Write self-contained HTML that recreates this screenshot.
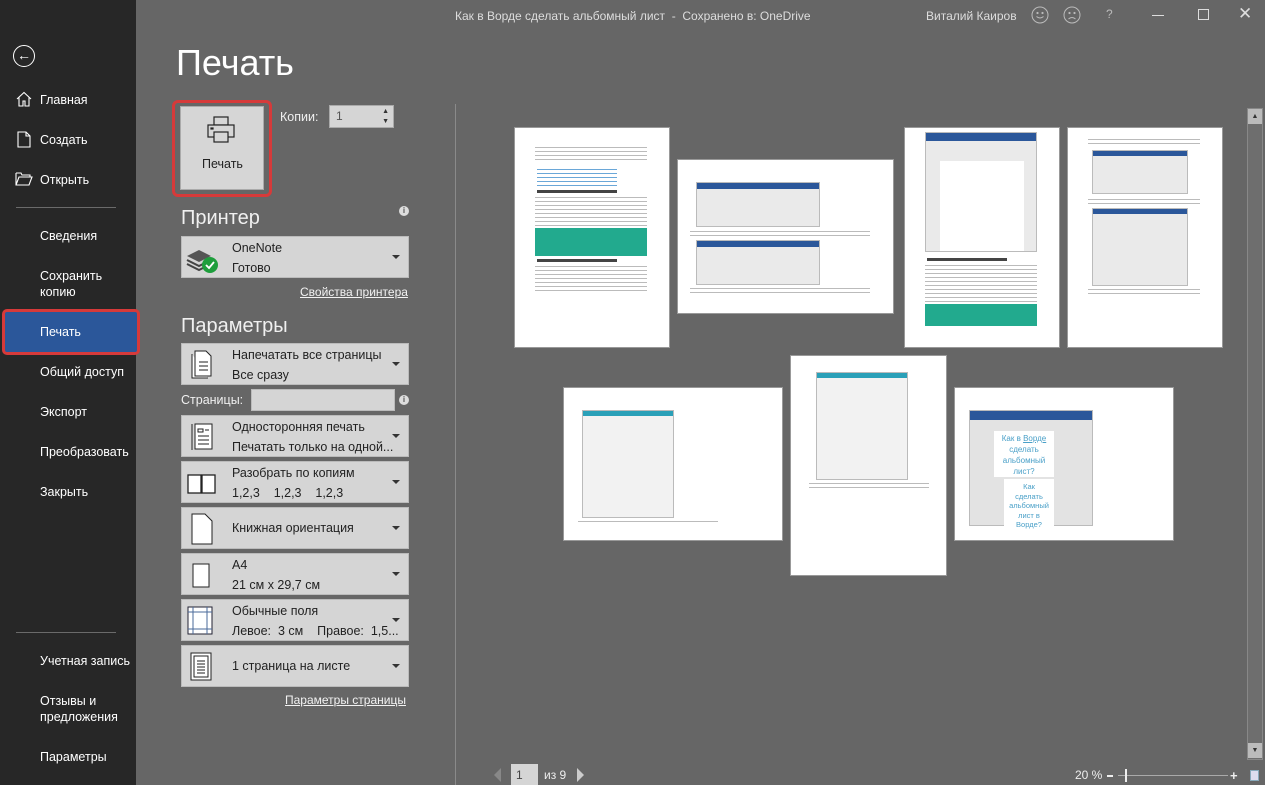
<!DOCTYPE html>
<html><head><meta charset="utf-8"><style>
*{margin:0;padding:0;box-sizing:border-box}
body{width:1265px;height:785px;overflow:hidden;background:#666;font-family:"Liberation Sans","Noto Sans CJK SC",sans-serif;position:relative}
.a{position:absolute}
.side{left:0;top:0;width:136px;height:785px;background:#272727}
.mi{position:absolute;left:40px;color:#fff;font-size:12.5px;line-height:16px}
.hr{position:absolute;left:16px;width:100px;height:1px;background:#6a6a6a}
.dd{position:absolute;left:181px;width:228px;background:#d5d5d5;border:1px solid #bbb}
.dd .t{position:absolute;left:50px;font-size:12.5px;color:#222;line-height:15px}
.dd .ar{position:absolute;right:8px;top:50%;margin-top:-2px;border-left:4px solid transparent;border-right:4px solid transparent;border-top:4px solid #333}
.h{position:absolute;left:181px;color:#f0f0f0;font-size:20px}
.lnk{position:absolute;color:#f2f2f2;font-size:12px;text-decoration:underline}
.pg{position:absolute;background:#fff;border:1px solid #999}
.tx{position:absolute;height:var(--h);background:repeating-linear-gradient(#fff 0 1px,#bbb 1px 2px,#fff 2px 4px)}
.ss{position:absolute;background:#eaeaea;border:1px solid #bbb}
.bar{position:absolute;background:#2b579a}
.info{position:absolute;width:10px;height:10px;border-radius:50%;background:#ddd;color:#555;font-size:8px;font-weight:bold;text-align:center;line-height:10px}
</style></head><body>
<div class="a side"></div>
<div class="a" style="left:455px;top:9px;color:#ddd;font-size:12px">Как в Ворде сделать альбомный лист&nbsp; - &nbsp;Сохранено в: OneDrive</div>
<div class="a" style="left:926px;top:9px;color:#ddd;font-size:12px">Виталий Каиров</div>
<svg class="a" style="left:1031px;top:6px" width="18" height="18" viewBox="0 0 18 18" fill="none" stroke="#bbb"><circle cx="9" cy="9" r="8"/><circle cx="6.5" cy="7" r=".6" fill="#bbb"/><circle cx="11.5" cy="7" r=".6" fill="#bbb"/><path d="M5.5 10.5q3.5 3 7 0"/></svg>
<svg class="a" style="left:1063px;top:6px" width="18" height="18" viewBox="0 0 18 18" fill="none" stroke="#bbb"><circle cx="9" cy="9" r="8"/><circle cx="6.5" cy="7" r=".6" fill="#bbb"/><circle cx="11.5" cy="7" r=".6" fill="#bbb"/><path d="M5.5 13q3.5-3 7 0"/></svg>
<div class="a" style="left:1106px;top:7px;color:#bbb;font-size:12px">?</div>
<div class="a" style="left:1152px;top:15px;width:12px;height:1px;background:#ddd"></div>
<div class="a" style="left:1198px;top:9px;width:11px;height:11px;border:1px solid #ddd"></div>
<div class="a" style="left:1238px;top:4px;color:#ddd;font-size:17px">✕</div>
<div class="a" style="left:13px;top:45px;width:22px;height:22px;border:1.5px solid #fff;border-radius:50%;color:#fff;font-size:14px;text-align:center;line-height:19px">←</div>
<svg class="a" style="left:16px;top:91px" width="16" height="16" viewBox="0 0 16 16" fill="none" stroke="#fff" stroke-width="1.1"><path d="M1 8L8 1.5 15 8M3 6.5V15h4v-5h2v5h4V6.5"/></svg>
<div class="mi" style="top:92px">Главная</div>
<svg class="a" style="left:17px;top:131px" width="14" height="17" viewBox="0 0 14 17" fill="none" stroke="#fff" stroke-width="1.1"><path d="M1 1h8l4 4v11H1zM9 1v4h4"/></svg>
<div class="mi" style="top:132px">Создать</div>
<svg class="a" style="left:15px;top:172px" width="18" height="14" viewBox="0 0 18 14" fill="none" stroke="#fff" stroke-width="1.1"><path d="M1 1h5l1 2h8v2M1 1v12h13l3-8H4L1 13"/></svg>
<div class="mi" style="top:172px">Открыть</div>
<div class="hr" style="top:207px"></div>
<div class="mi" style="top:228px">Сведения</div>
<div class="mi" style="top:268px">Сохранить<br>копию</div>
<div class="a" style="left:2px;top:309px;width:138px;height:46px;border:3px solid #d63a3a;border-radius:5px;background:#2b579a"></div>
<div class="mi" style="top:324px">Печать</div>
<div class="mi" style="top:364px">Общий доступ</div>
<div class="mi" style="top:404px">Экспорт</div>
<div class="mi" style="top:444px">Преобразовать</div>
<div class="mi" style="top:484px">Закрыть</div>
<div class="hr" style="top:632px"></div>
<div class="mi" style="top:653px">Учетная запись</div>
<div class="mi" style="top:693px">Отзывы и<br>предложения</div>
<div class="mi" style="top:749px">Параметры</div>
<div class="a" style="left:176px;top:42px;color:#fff;font-size:36px;font-weight:300">Печать</div>
<div class="a" style="left:172px;top:100px;width:100px;height:97px;border:3px solid #d63a3a;border-radius:6px"></div>
<div class="a" style="left:180px;top:106px;width:84px;height:84px;background:#d6d6d6;border:1px solid #aaa"></div>
<svg class="a" style="left:206px;top:115px" width="30" height="30" viewBox="0 0 30 30" fill="#d6d6d6" stroke="#222" stroke-width="1.2"><rect x="8" y="2" width="14" height="8"/><rect x="2" y="10" width="26" height="12"/><rect x="8" y="17" width="14" height="10"/><rect x="5" y="13" width="2" height="1" fill="#222"/></svg>
<div class="a" style="left:202px;top:157px;color:#222;font-size:12.5px">Печать</div>
<div class="a" style="left:280px;top:110px;color:#f0f0f0;font-size:12.5px">Копии:</div>
<div class="a" style="left:329px;top:105px;width:65px;height:23px;background:#d5d5d5;border:1px solid #aaa;color:#555;font-size:12px;padding:3px 6px">1<span style="position:absolute;right:4px;top:1px;font-size:7px;line-height:10px;color:#333">▲<br>▼</span></div>
<div class="h" style="top:207px">Принтер</div>
<div class="info" style="left:399px;top:206px">i</div>
<div class="dd" style="top:236px;height:42px"><svg class="a" style="left:3px;top:9px" width="36" height="28" viewBox="0 0 36 28"><path d="M2 10l12-6 12 6-12 6z" fill="#555"/><path d="M2 14l12 6 12-6M2 18l12 6 10-5" stroke="#444" fill="none" stroke-width="2"/><circle cx="25" cy="19" r="8" fill="#1e9e3c"/><path d="M21 19l3 3 5-6" stroke="#fff" stroke-width="1.8" fill="none"/></svg><div class="t" style="top:4px">OneNote</div><div class="t" style="top:24px">Готово</div><div class="ar"></div></div>
<div class="lnk" style="left:300px;top:285px">Свойства принтера</div>
<div class="h" style="top:315px">Параметры</div>
<div class="dd" style="top:343px;height:42px"><svg class="a" style="left:8px;top:6px" width="24" height="30" viewBox="0 0 24 30" fill="#fff" stroke="#222"><path d="M2 4v24h16"/><path d="M5 1h11l5 5v20H5z"/><path d="M9 12h9M9 16h9M9 20h9" /></svg><div class="t" style="top:4px">Напечатать все страницы</div><div class="t" style="top:24px">Все сразу</div><div class="ar"></div></div>
<div class="a" style="left:181px;top:393px;color:#f0f0f0;font-size:12.5px">Страницы:</div>
<div class="a" style="left:251px;top:389px;width:144px;height:22px;background:#d5d5d5;border:1px solid #bbb"></div>
<div class="info" style="left:399px;top:395px">i</div>
<div class="dd" style="top:415px;height:42px"><svg class="a" style="left:8px;top:6px" width="24" height="30" viewBox="0 0 24 30" fill="#fff" stroke="#222"><path d="M2 2v26"/><rect x="5" y="2" width="17" height="25"/><path d="M8 7h5v3H8zM15 8h4M8 14h11M8 18h11M8 22h11"/></svg><div class="t" style="top:4px">Односторонняя печать</div><div class="t" style="top:24px">Печатать только на одной...</div><div class="ar"></div></div>
<div class="dd" style="top:461px;height:42px"><svg class="a" style="left:5px;top:12px" width="30" height="20" viewBox="0 0 30 20" fill="#fff" stroke="#222" stroke-width="1.3"><rect x="1" y="1" width="13" height="18"/><rect x="15" y="1" width="13" height="18"/></svg><div class="t" style="top:4px">Разобрать по копиям</div><div class="t" style="top:24px">1,2,3&nbsp;&nbsp;&nbsp; 1,2,3&nbsp;&nbsp;&nbsp; 1,2,3</div><div class="ar"></div></div>
<div class="dd" style="top:507px;height:42px"><svg class="a" style="left:9px;top:5px" width="22" height="32" viewBox="0 0 22 32" fill="#fff" stroke="#222"><path d="M1 1h13l7 7v23H1z"/></svg><div class="t" style="top:13px">Книжная ориентация</div><div class="ar"></div></div>
<div class="dd" style="top:553px;height:42px"><svg class="a" style="left:10px;top:9px" width="20" height="26" viewBox="0 0 20 26" fill="#fff" stroke="#222"><rect x="1" y="1" width="16" height="23"/></svg><div class="t" style="top:4px">A4</div><div class="t" style="top:24px">21 см x 29,7 см</div><div class="ar"></div></div>
<div class="dd" style="top:599px;height:42px"><svg class="a" style="left:5px;top:6px" width="28" height="30" viewBox="0 0 28 30" fill="#fff" stroke="#223"><rect x="1" y="1" width="24" height="27"/><path d="M6 1v27M20 1v27M1 6h24M1 23h24" stroke="#4a6a9a"/></svg><div class="t" style="top:4px">Обычные поля</div><div class="t" style="top:24px">Левое:&nbsp; 3 см&nbsp;&nbsp;&nbsp; Правое:&nbsp; 1,5...</div><div class="ar"></div></div>
<div class="dd" style="top:645px;height:42px"><svg class="a" style="left:8px;top:6px" width="24" height="30" viewBox="0 0 24 30" fill="#fff" stroke="#222"><rect x="1" y="1" width="20" height="27"/><rect x="4" y="4" width="14" height="21"/><path d="M7 9h8M7 12h8M7 15h8M7 18h8M7 21h8"/></svg><div class="t" style="top:13px">1 страница на листе</div><div class="ar"></div></div>
<div class="lnk" style="left:285px;top:693px">Параметры страницы</div>
<div class="a" style="left:455px;top:104px;width:1px;height:681px;background:#8a8a8a"></div>
<div class="pg" style="left:514px;top:127px;width:156px;height:221px">
 <div class="tx" style="--h:16px;left:20px;top:18px;width:112px"></div>
 <div class="a" style="left:22px;top:40px;width:80px;height:20px;background:repeating-linear-gradient(#fff 0 1px,#6aa7d8 1px 2px,#fff 2px 4px)"></div>
 <div class="a" style="left:22px;top:62px;width:80px;height:3px;background:#444"></div>
 <div class="tx" style="--h:30px;left:20px;top:68px;width:112px"></div>
 <div class="a" style="left:20px;top:100px;width:112px;height:28px;background:#22aa8e"></div>
 <div class="a" style="left:22px;top:131px;width:80px;height:3px;background:#444"></div>
 <div class="tx" style="--h:28px;left:20px;top:137px;width:112px"></div>
</div>
<div class="pg" style="left:677px;top:159px;width:217px;height:155px">
 <div class="ss" style="left:18px;top:22px;width:124px;height:45px"><div class="bar" style="left:0;top:0;width:122px;height:6px"></div></div>
 <div class="tx" style="--h:6px;left:12px;top:70px;width:180px"></div>
 <div class="ss" style="left:18px;top:80px;width:124px;height:45px"><div class="bar" style="left:0;top:0;width:122px;height:6px"></div></div>
 <div class="tx" style="--h:8px;left:12px;top:127px;width:180px"></div>
</div>
<div class="pg" style="left:904px;top:127px;width:156px;height:221px">
 <div class="ss" style="left:20px;top:4px;width:112px;height:120px"><div class="bar" style="left:0;top:0;width:110px;height:8px"></div><div class="a" style="left:14px;top:28px;width:84px;height:90px;background:#fff"></div></div>
 <div class="a" style="left:22px;top:130px;width:80px;height:3px;background:#444"></div>
 <div class="tx" style="--h:40px;left:20px;top:136px;width:112px"></div>
 <div class="a" style="left:20px;top:176px;width:112px;height:22px;background:#22aa8e"></div>
</div>
<div class="pg" style="left:1067px;top:127px;width:156px;height:221px">
 <div class="tx" style="--h:8px;left:20px;top:10px;width:112px"></div>
 <div class="ss" style="left:24px;top:22px;width:96px;height:44px"><div class="bar" style="left:0;top:0;width:94px;height:5px"></div></div>
 <div class="tx" style="--h:6px;left:20px;top:70px;width:112px"></div>
 <div class="ss" style="left:24px;top:80px;width:96px;height:78px"><div class="bar" style="left:0;top:0;width:94px;height:5px"></div></div>
 <div class="tx" style="--h:8px;left:20px;top:160px;width:112px"></div>
</div>
<div class="pg" style="left:563px;top:387px;width:220px;height:154px">
 <div class="ss" style="left:18px;top:22px;width:92px;height:108px;background:#f2f2f2"><div class="a" style="left:0;top:0;width:90px;height:5px;background:#2aa0b8"></div></div>
 <div class="tx" style="--h:4px;left:14px;top:132px;width:140px"></div>
</div>
<div class="pg" style="left:790px;top:355px;width:157px;height:221px">
 <div class="ss" style="left:25px;top:16px;width:92px;height:108px;background:#f2f2f2"><div class="a" style="left:0;top:0;width:90px;height:5px;background:#2aa0b8"></div></div>
 <div class="tx" style="--h:7px;left:18px;top:126px;width:120px"></div>
</div>
<div class="pg" style="left:954px;top:387px;width:220px;height:154px">
 <div class="ss" style="left:14px;top:22px;width:124px;height:116px;background:#e3e3e3"><div class="bar" style="left:0;top:0;width:122px;height:9px"></div>
  <div class="a" style="left:24px;top:20px;width:60px;height:46px;background:#fff;color:#4aa0c8;font-size:8px;text-align:center;line-height:11px;padding-top:2px">Как в <u>Ворде</u><br>сделать<br>альбомный лист?</div>
  <div class="a" style="left:34px;top:68px;width:50px;height:48px;background:#fff;color:#4aa0c8;font-size:7.5px;text-align:center;line-height:9.5px;padding-top:3px">Как<br>сделать<br>альбомный<br>лист в<br>Ворде?</div>
 </div>
</div>
<div class="a" style="left:1247px;top:108px;width:16px;height:652px;background:#6e6e6e;border:1px solid #888"></div>
<div class="a" style="left:1248px;top:109px;width:14px;height:15px;background:#bbb;color:#333;font-size:7px;text-align:center;line-height:15px">▲</div>
<div class="a" style="left:1248px;top:743px;width:14px;height:15px;background:#bbb;color:#333;font-size:7px;text-align:center;line-height:15px">▼</div>
<div class="a" style="left:494px;top:768px;border-top:7px solid transparent;border-bottom:7px solid transparent;border-right:7px solid #888"></div>
<div class="a" style="left:511px;top:764px;width:27px;height:21px;background:#d5d5d5;color:#444;font-size:12px;padding:4px 5px">1</div>
<div class="a" style="left:544px;top:768px;color:#eee;font-size:12px">из 9</div>
<div class="a" style="left:577px;top:768px;border-top:7px solid transparent;border-bottom:7px solid transparent;border-left:7px solid #ccc"></div>
<div class="a" style="left:1075px;top:768px;color:#eee;font-size:12px">20 %</div>
<div class="a" style="left:1107px;top:775px;width:6px;height:2px;background:#eee"></div>
<div class="a" style="left:1118px;top:775px;width:110px;height:1px;background:#aaa"></div>
<div class="a" style="left:1125px;top:769px;width:2px;height:13px;background:#eee"></div>
<div class="a" style="left:1230px;top:768px;color:#eee;font-size:13px;font-weight:bold">+</div>
<div class="a" style="left:1250px;top:770px;width:9px;height:11px;border:1px solid #8ab;background:#dde"></div>
</body></html>
